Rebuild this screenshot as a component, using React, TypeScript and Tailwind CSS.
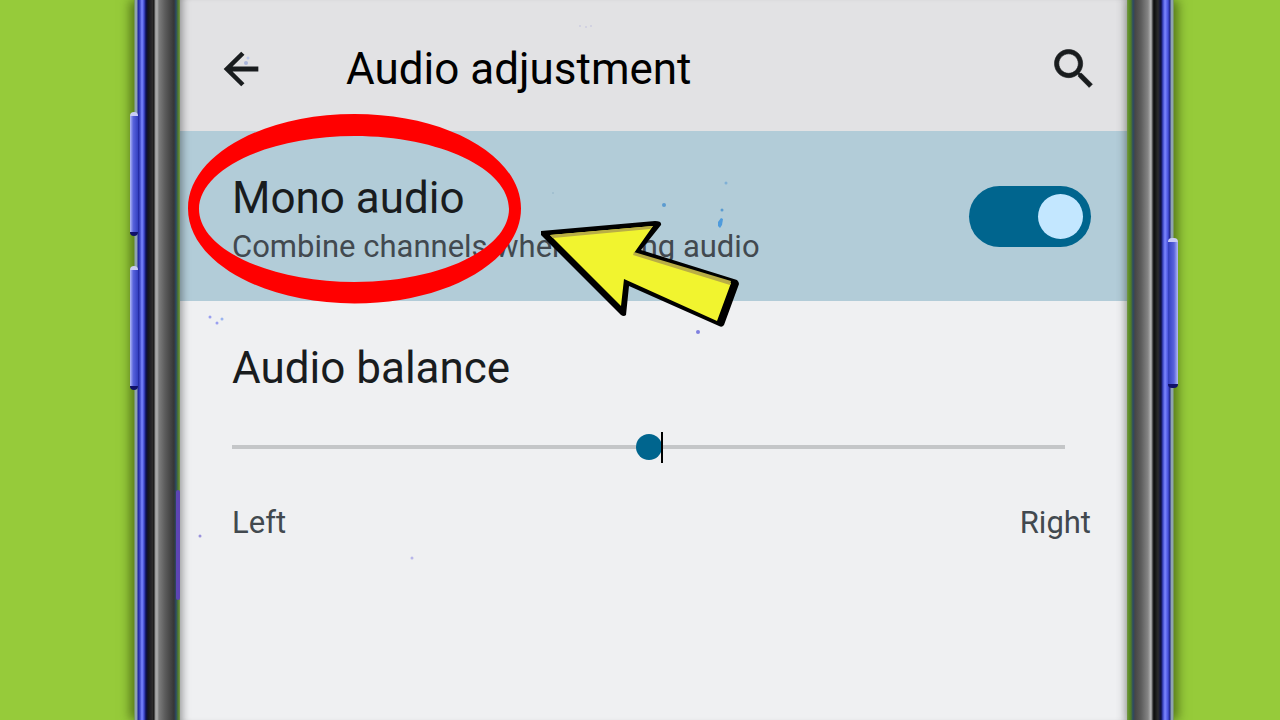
import React, { useState } from 'react';

const specks = [
  { x: 664, y: 205, r: 2, color: '#5b9bd0' },
  { x: 726, y: 183, r: 1.5, color: '#7fb0d6' },
  { x: 722, y: 210, r: 1.5, color: '#5b9bd0' },
  { x: 553, y: 193, r: 1, color: '#9dbdce' },
  { x: 698, y: 332, r: 2, color: '#7f80e0' },
  { x: 210, y: 317, r: 1.5, color: '#9a9ff0' },
  { x: 217, y: 323, r: 1.5, color: '#9a9ff0' },
  { x: 222, y: 319, r: 1.5, color: '#9ab4f0' },
  { x: 200, y: 536, r: 1.5, color: '#9a92dc' },
  { x: 412, y: 558, r: 1.5, color: '#b8b6ea' },
  { x: 580, y: 26, r: 1, color: '#cdcde0' },
  { x: 586, y: 27, r: 1, color: '#cdcde0' },
  { x: 591, y: 26, r: 1, color: '#cdcde0' },
  { x: 248, y: 58, r: 1.5, color: '#bcc8ea' },
  { x: 246, y: 63, r: 2, color: '#aab6dc' },
];

const BackIcon = () => (
  <svg viewBox="0 0 24 24" className="size-[52px]" fill="currentColor" aria-hidden="true">
    <path d="M20 10.9H8.1l5.5-5.45L12.1 4 4 12l8.1 8 1.5-1.45L8.1 13.1H20z" />
  </svg>
);

const SearchIcon = () => (
  <svg viewBox="0 0 24 24" className="size-[52px]" fill="currentColor" stroke="currentColor" strokeWidth="0.3" aria-hidden="true">
    <path d="M15.5 14h-.79l-.28-.27C15.41 12.59 16 11.11 16 9.5 16 5.91 13.09 3 9.5 3S3 5.91 3 9.5 5.91 16 9.5 16c1.61 0 3.09-.59 4.23-1.57l.27.28v.79l5 4.99L20.49 19l-4.99-5zm-6 0C7.01 14 5 11.99 5 9.5S7.01 5 9.5 5 14 7.01 14 9.5 11.99 14 9.5 14z" />
  </svg>
);

const Annotations = () => (
  <svg
    viewBox="180 0 947 720"
    className="pointer-events-none absolute top-0 left-0 z-20 h-[720px] w-[947px]"
    aria-hidden="true"
  >
    {specks.map((s) => (
      <circle key={`${s.x}-${s.y}`} cx={s.x} cy={s.y} r={s.r} fill={s.color} />
    ))}
    <path d="M718 222l3-4 2 1-1 6-2 3-2-2z" fill="#4f9bdc" />
    <path
      fill="#ff0000"
      fillRule="evenodd"
      d="M188 208.5C188 156 262 114 354.5 114S521 156 521 208.5 447 303.5 354.5 303.5 188 261 188 208.5zM199 209C199 249 269 282 354.5 282S509 249 509 209 440 136 354.5 136 199 169 199 209z"
    />
    <path
      fill="#000"
      d="M541 231L655 221Q662 221 661 225L641 250 737 280Q739 282 739 284L724 325Q722 328 719 326L629 286 626 315Q624 317 621 315L541 235z"
    />
    <path fill="#f1f42f" d="M550 235L653 226 634 253 731 283 717 321 624 279 621 306z" />
    <path fill="#b9ae45" d="M550 235L653 226 650 229 553 238zM634 252L731 281 730 285 633 255z" />
  </svg>
);

const sideButton =
  'absolute rounded-sm border-y-4 border-t-[#c9ccf5] border-b-[#10106a]';

const LeftRail = () => (
  <div className="relative w-[46px] shrink-0 bg-[linear-gradient(90deg,#5f8a1e_0px,#8fa3b0_1px,#8fa3b0_3px,#1c2299_4px,#3f49c8_6px,#7d88ff_8px,#3f49d0_10px,#0b0d50_12px,#15151c_14px,#302e2e_19px,#0c0c0c_20px,#909090_21px,#b0b0b0_23px,#7c7c7c_25px,#5c5c5c_31px,#363636_40px,#2b4a66_42px,#4e7a2c_44px,#76954a_46px)] shadow-[-4px_0_10px_rgba(40,60,0,0.6)]">
    <span className={`${sideButton} top-[112px] -left-1 h-[124px] w-2 bg-[linear-gradient(90deg,#b4baf5,#5863dc_40%,#333fc0)]`} />
    <span className={`${sideButton} top-[266px] -left-1 h-[124px] w-2 bg-[linear-gradient(90deg,#b4baf5,#5863dc_40%,#333fc0)]`} />
    <span className="absolute top-[490px] right-0 h-[110px] w-1 rounded-full bg-[#5d45b4]" />
  </div>
);

const RightRail = () => (
  <div className="relative w-[47px] shrink-0 bg-[linear-gradient(90deg,#76954a_0px,#5d9022_2px,#4e7a2c_4px,#2b4a66_6px,#464646_8px,#5c5c5c_14px,#858585_21px,#b8b8b8_24px,#303030_26px,#0c0c0c_27px,#2c2c2c_31px,#0b0d40_34px,#3f49c8_36px,#7d88ff_38px,#4650dc_41px,#1c2280_43px,#8fa3b0_44px,#8fa3b0_46px,#5f8a1e_47px)] shadow-[4px_0_10px_rgba(40,60,0,0.6)]">
    <span className={`${sideButton} top-[238px] -right-1 h-[150px] w-2.5 bg-[linear-gradient(270deg,#b4baf5,#5863dc_40%,#333fc0)]`} />
  </div>
);

export default function App() {
  const [mono, setMono] = useState(true);
  const [balance, setBalance] = useState(50);

  return (
    <div className="flex min-h-screen bg-[#96cb3a] pr-[106px] pl-[134px] font-[Roboto,sans-serif] text-[#191c1e]">
      <LeftRail />

      <main className="relative min-w-0 flex-1 bg-[#eff0f2]">
        <header className="flex items-center bg-[#e2e2e4] pt-[43px] pr-[27px] pb-9 pl-[35px]">
          <button type="button" aria-label="Back">
            <BackIcon />
          </button>
          <h1 className="ml-[79px] flex-1 text-[44px] leading-[52px] text-black">Audio adjustment</h1>
          <button type="button" aria-label="Search">
            <SearchIcon />
          </button>
        </header>

        <section className="flex items-center justify-between bg-[#b2ccd8] py-[35px] pr-9 pl-[52px]">
          <div className="pt-1.5">
            <label htmlFor="mono" className="block text-[44px] leading-[52px]">
              Mono audio
            </label>
            <p id="mono-hint" className="mt-1 text-[31px] leading-[38px] text-[#42494f]">
              Combine channels when playing audio
            </p>
          </div>
          <input
            id="mono"
            type="checkbox"
            role="switch"
            aria-describedby="mono-hint"
            checked={mono}
            onChange={(e) => setMono(e.target.checked)}
            className="h-[61px] w-[122px] shrink-0 cursor-pointer appearance-none rounded-full bg-[#71787e] p-2 before:block before:size-[45px] before:rounded-full before:bg-[#c3e7ff] checked:bg-[#00658e] checked:before:ml-auto"
          />
        </section>

        <section className="pt-[41px] pr-9 pl-[52px]">
          <label htmlFor="balance" className="block text-[44px] leading-[52px]">
            Audio balance
          </label>
          <div className="relative mt-[37px] mr-[26px] flex h-8 items-center">
            <input
              id="balance"
              type="range"
              min={0}
              max={100}
              value={balance}
              onChange={(e) => setBalance(Number(e.target.value))}
              className="h-8 w-full cursor-pointer appearance-none bg-transparent [&::-webkit-slider-runnable-track]:h-1 [&::-webkit-slider-runnable-track]:bg-[#c4c6c8] [&::-webkit-slider-thumb]:-mt-[11px] [&::-webkit-slider-thumb]:size-[26px] [&::-webkit-slider-thumb]:appearance-none [&::-webkit-slider-thumb]:rounded-full [&::-webkit-slider-thumb]:bg-[#00658e]"
            />
            <span className="pointer-events-none absolute left-1/2 ml-3 h-[31px] w-[2px] bg-black" />
          </div>
          <div className="mt-[41px] flex justify-between text-[31px] leading-[38px] text-[#42494f]">
            <span>Left</span>
            <span>Right</span>
          </div>
        </section>

        <div className="pointer-events-none absolute inset-0 shadow-[inset_9px_0_8px_-7px_rgba(0,0,0,0.4),inset_-9px_0_8px_-7px_rgba(0,0,0,0.25)]" />
        <Annotations />
      </main>

      <RightRail />
    </div>
  );
}
